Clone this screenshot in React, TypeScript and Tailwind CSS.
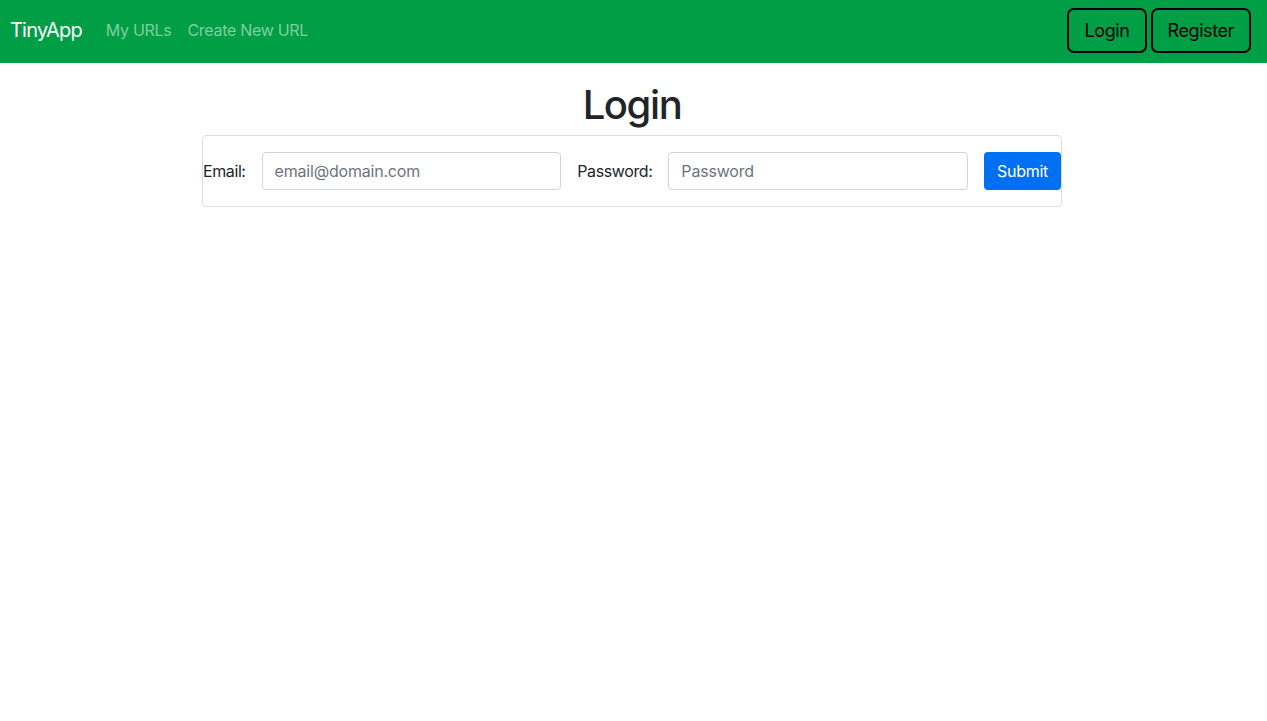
import React from 'react';

const font = { fontFamily: 'Inter, "Liberation Sans", sans-serif' };

const NavButton: React.FC<{ label: string }> = ({ label }) => (
  <button className="h-[45px] px-[15px] border-2 border-black rounded-[7px] text-[18px] text-black bg-transparent tracking-[-0.4px]">
    {label}
  </button>
);

export default function App() {
  return (
    <div className="min-h-screen bg-white text-[#212529]" style={font}>
      <nav className="h-[63px] bg-[#009e45] flex items-center justify-between pl-[10px] pr-4 pb-[3px]">
        <div className="flex items-center">
          <span className="text-white text-[20px] mr-4 tracking-[-0.8px]">TinyApp</span>
          <a className="px-2 text-[16px] text-[#80ce9f] tracking-[-0.3px]">My URLs</a>
          <a className="px-2 text-[16px] text-[#80ce9f] tracking-[-0.3px]">Create New URL</a>
        </div>
        <div className="flex items-center gap-1">
          <NavButton label="Login" />
          <NavButton label="Register" />
        </div>
      </nav>

      <div className="flex justify-center pr-[3px]">
        <main className="w-[860px]">
          <h1 className="text-center text-[40px] font-medium leading-[1.2] mt-[18px] mb-[6px] tracking-[-1.4px]">Login</h1>
          <form className="flex items-center border border-[#dadde1] rounded-[4px] py-4">
            <label className="text-[16px] text-[#212529] mr-4 tracking-[-0.4px]">Email:</label>
            <input
              type="text"
              placeholder="email@domain.com"
              className="w-[300px] h-[38px] px-3 border border-[#ced4da] rounded-[4px] text-[16px] tracking-[-0.2px] placeholder:text-[#6c757d] outline-none"
            />
            <label className="text-[16px] text-[#212529] mx-4 tracking-[-0.4px]">Password:</label>
            <input
              type="password"
              placeholder="Password"
              className="w-[300px] h-[38px] px-3 border border-[#ced4da] rounded-[4px] text-[16px] tracking-[-0.2px] placeholder:text-[#6c757d] outline-none"
            />
            <button type="button" className="ml-4 h-[38px] w-[77px] bg-[#0070f3] text-white text-[16px] rounded-[4px] tracking-[-0.3px]">
              Submit
            </button>
          </form>
        </main>
      </div>
    </div>
  );
}
